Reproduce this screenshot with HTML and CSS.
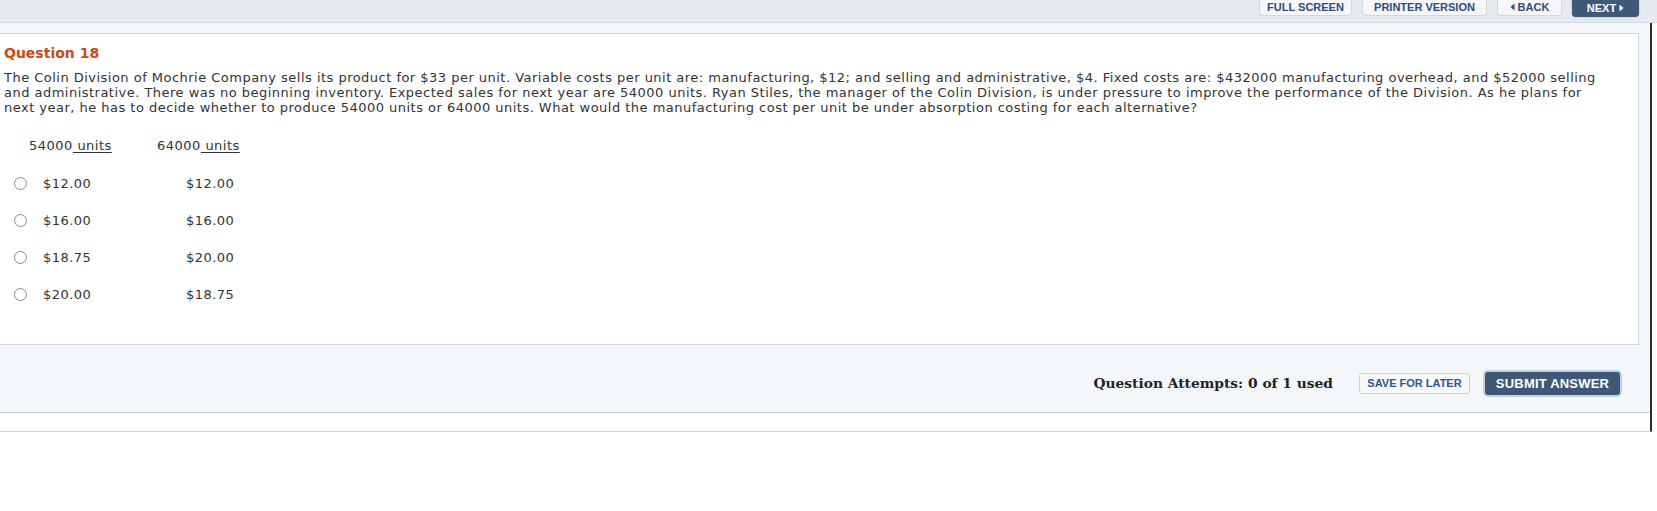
FILE: index.html
```
<!DOCTYPE html>
<html lang="en">
<head>
<meta charset="utf-8">
<title>Question 18</title>
<link rel="stylesheet" href="styles.css">
</head>
<body>
<header class="topbar">
  <nav class="top-actions">
    <button class="tbtn" type="button">FULL SCREEN</button>
    <button class="tbtn" type="button">PRINTER VERSION</button>
    <button class="tbtn" type="button"><svg class="tri" width="5" height="8" viewBox="0 0 5 8"><path d="M4.5 0.5 L0.5 4 L4.5 7.5 Z" fill="currentColor"/></svg>BACK</button>
    <button class="tbtn tbtn-dark" type="button">NEXT<svg class="tri tri-r" width="5" height="8" viewBox="0 0 5 8"><path d="M0.5 0.5 L4.5 4 L0.5 7.5 Z" fill="currentColor"/></svg></button>
  </nav>
</header>
<div class="frame">
  <main class="panel">
    <section class="card">
      <h2 class="q-title">Question 18</h2>
      <p class="q-text">The Colin Division of Mochrie Company sells its product for $33 per unit. Variable costs per unit are: manufacturing, $12; and selling and administrative, $4. Fixed costs are: $432000 manufacturing overhead, and $52000 selling and administrative. There was no beginning inventory. Expected sales for next year are 54000 units. Ryan Stiles, the manager of the Colin Division, is under pressure to improve the performance of the Division. As he plans for next year, he has to decide whether to produce 54000 units or 64000 units. What would the manufacturing cost per unit be under absorption costing for each alternative?</p>
      <div class="answers">
        <div class="ans-head">
          <span class="col-h1">54000<u> units</u></span>
          <span class="col-h2">64000<u> units</u></span>
        </div>
        <label class="ans-row"><input type="radio" name="ans"><span class="v1">$12.00</span><span class="v2">$12.00</span></label>
        <label class="ans-row"><input type="radio" name="ans"><span class="v1">$16.00</span><span class="v2">$16.00</span></label>
        <label class="ans-row"><input type="radio" name="ans"><span class="v1">$18.75</span><span class="v2">$20.00</span></label>
        <label class="ans-row"><input type="radio" name="ans"><span class="v1">$20.00</span><span class="v2">$18.75</span></label>
      </div>
    </section>
    <footer class="q-footer">
      <span class="attempts">Question Attempts: 0 of 1 used</span>
      <button class="btn-light" type="button">SAVE FOR LATER</button>
      <button class="btn-dark" type="button">SUBMIT ANSWER</button>
    </footer>
  </main>
  <div class="strip"></div>
</div>
</body>
</html>
```
FILE: styles.css
```
* { box-sizing: border-box; }
html, body { margin: 0; padding: 0; background: #fff; }
body {
  font-family: "DejaVu Sans", Verdana, sans-serif;
  color: #333;
  width: 1657px;
}
button { font-family: "Liberation Sans", Arial, sans-serif; cursor: pointer; white-space: nowrap; }

.topbar {
  height: 23px;
  background: #e6eaee;
  border-bottom: 1px solid #d3dae2;
  display: flex;
  justify-content: flex-end;
  padding-right: 18px;
}
.top-actions { display: flex; gap: 10px; align-items: flex-start; }
.tbtn {
  height: 16px;
  margin: 0;
  padding: 0 0 1px;
  border: 1px solid #cfd7e0;
  border-top: none;
  border-radius: 0 0 4px 4px;
  background: #f5f7f9;
  color: #2b4c85;
  font-size: 11px;
  font-weight: bold;
  line-height: 14px;
  display: flex;
  align-items: center;
  justify-content: center;
  gap: 3px;
}
.tbtn:nth-child(1) { width: 93px; }
.tbtn:nth-child(2) { width: 125px; }
.tbtn:nth-child(3) { width: 65px; }
.tbtn-dark {
  width: 67px;
  height: 17px;
  background: #3d5977;
  border-color: #3d5977;
  color: #fff;
  box-shadow: 0 0 2px #9aa8b8;
}
.tri { display: block; }

.frame {
  width: 1652px;
  border-right: 2px solid #2b2b2b;
  border-bottom: 1px solid #c9d1db;
}
.panel {
  background: #f4f7fa;
  padding: 10px 11px 0 0;
  border-bottom: 1px solid #c9d1db;
}
.card {
  background: #fff;
  border: 1px solid #cdd6e0;
  border-left: none;
  padding: 11px 25px 31px 4px;
}
.q-title {
  margin: 0;
  font-size: 14px;
  line-height: 17px;
  font-weight: bold;
  color: #cf4a0f;
}
.q-text {
  margin: 8px 0 0;
  font-size: 13px;
  line-height: 15px;
  letter-spacing: 0.48px;
}
.answers { margin-top: 23px; font-size: 13px; line-height: 15px; letter-spacing: 0.48px; }
.ans-head { display: flex; padding-left: 25px; margin-bottom: 12px; }
.col-h1 { width: 128px; }
.ans-head u { text-underline-offset: 2px; }
.ans-row {
  display: flex;
  align-items: center;
  height: 37px;
  padding-left: 10px;
}
.ans-row input {
  appearance: none;
  -webkit-appearance: none;
  width: 13px;
  height: 13px;
  margin: 0 16px 0 0;
  border: 1px solid #8a8a8a;
  border-radius: 50%;
  background: #fff;
}
.v1 { width: 143px; }

.q-footer {
  height: 67px;
  display: flex;
  align-items: center;
  justify-content: flex-end;
  padding: 9px 19px 0 0;
}
.attempts {
  font-family: "DejaVu Serif", Cambria, Georgia, serif;
  font-weight: bold;
  font-size: 13.8px;
  color: #222;
  margin-right: 26px;
}
.btn-light {
  width: 111px;
  height: 21px;
  padding: 0;
  border: 1px solid #c9d3dd;
  border-radius: 3px;
  background: #f6f8fa;
  color: #2b5797;
  font-size: 11px;
  font-weight: bold;
  margin-right: 15px;
}
.btn-dark {
  width: 135px;
  height: 23px;
  padding: 0;
  border: none;
  border-radius: 3px;
  background: #3d5977;
  color: #fff;
  font-size: 13px;
  font-weight: bold;
  letter-spacing: 0.2px;
  box-shadow: 0 0 0 2px #c7d1dc;
}
.strip { height: 18px; background: #fff; }
```
